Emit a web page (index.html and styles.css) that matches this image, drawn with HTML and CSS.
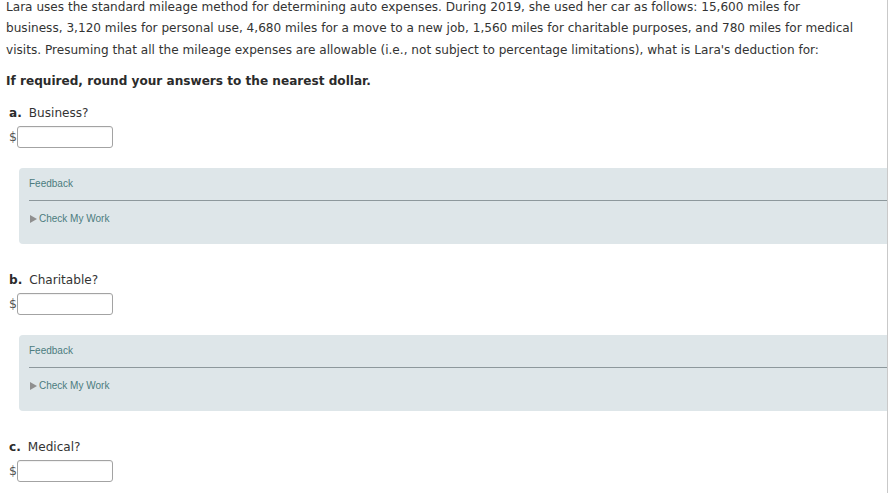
FILE: index.html
```html
<!DOCTYPE html>
<html>
<head>
<meta charset="utf-8">
<link rel="stylesheet" href="styles.css">
</head>
<body>
<div class="page">
  <p class="stem">Lara uses the standard mileage method for determining auto expenses. During 2019, she used her car as follows: 15,600 miles for business, 3,120 miles for personal use, 4,680 miles for a move to a new job, 1,560 miles for charitable purposes, and 780 miles for medical visits. Presuming that all the mileage expenses are allowable (i.e., not subject to percentage limitations), what is Lara's deduction for:</p>
  <p class="note">If required, round your answers to the nearest dollar.</p>

  <div class="part">
    <div class="label"><b>a.</b>Business?</div>
    <div class="answer"><span class="cur">$</span><input class="field" type="text"></div>
    <div class="feedback">
      <div class="fb-title">Feedback</div>
      <div class="fb-check"><span class="tri"></span>Check My Work</div>
    </div>
  </div>

  <div class="part">
    <div class="label"><b>b.</b>Charitable?</div>
    <div class="answer"><span class="cur">$</span><input class="field" type="text"></div>
    <div class="feedback">
      <div class="fb-title">Feedback</div>
      <div class="fb-check"><span class="tri"></span>Check My Work</div>
    </div>
  </div>

  <div class="part">
    <div class="label"><b>c.</b>Medical?</div>
    <div class="answer"><span class="cur">$</span><input class="field" type="text"></div>
  </div>
</div>
</body>
</html>
```
FILE: styles.css
```css
html, body {
  margin: 0;
  padding: 0;
  background: #fff;
  overflow: hidden;
}
.page {
  box-sizing: border-box;
  width: 888px;
  height: 493px;
  padding-left: 6px;
  border-right: 1px solid #c9c9c9;
  font-family: "DejaVu Sans", Verdana, sans-serif;
  font-size: 12.1px;
  color: #333;
  overflow: hidden;
}
.stem {
  margin: -3.5px 0 0 0;
  line-height: 21.5px;
  padding-right: 29px;
}
.note {
  margin: 9.5px 0 0 0;
  font-weight: bold;
  line-height: 21px;
  color: #2b2b2b;
}
.part {
  display: flex;
  flex-direction: column;
}
.label {
  margin-top: 11px;
  padding-left: 3px;
  line-height: 20px;
}
.part + .part .label {
  margin-top: 26px;
}
.label b {
  margin-right: 7px;
  color: #2b2b2b;
}
.answer {
  display: flex;
  align-items: center;
  margin-top: 3px;
  padding-left: 3px;
}
.cur {
  width: 8px;
  font-size: 12.5px;
  color: #555;
}
.field {
  box-sizing: border-box;
  width: 96px;
  height: 22px;
  margin: 0;
  border: 1px solid #a3a3a3;
  border-radius: 3px;
  background: #fff;
  box-shadow: inset 0 1px 1px rgba(0,0,0,0.06);
}
.feedback {
  margin: 20px 0 0 13px;
  height: 76px;
  background: #dee6e9;
  border-radius: 4px 0 0 4px;
  padding-left: 10px;
  font-family: "Liberation Sans", Arial, sans-serif;
  font-size: 10px;
  color: #4c7c7e;
  display: flex;
  flex-direction: column;
}
.fb-title {
  height: 31px;
  line-height: 30px;
  border-bottom: 1px solid #8d989c;
  padding-top: 1px;
}
.fb-check {
  display: flex;
  align-items: center;
  margin-top: 12px;
  line-height: 12px;
}
.tri {
  width: 0;
  height: 0;
  border-top: 4px solid transparent;
  border-bottom: 4px solid transparent;
  border-left: 7px solid #8f8f8f;
  margin: 0 2px 0 1px;
}
```
